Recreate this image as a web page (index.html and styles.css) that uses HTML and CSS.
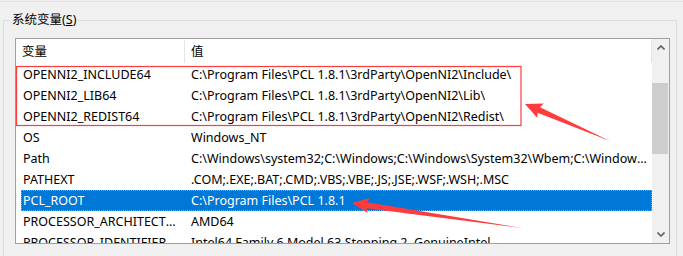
FILE: index.html
```html
<!DOCTYPE html>
<html lang="zh-CN">
<head>
    <meta charset="UTF-8">
    <title>系统变量</title>
    <link rel="stylesheet" href="styles.css">
</head>
<body>
    <div class="topline"></div>

    <fieldset class="group">
        <legend>系统变量(<u>S</u>)</legend>

        <div class="listview">
            <div class="list-main">
                <div class="list-header">
                    <div class="hcell name">变量</div>
                    <div class="hcell value">值</div>
                </div>
                <div class="rows">
                    <div class="row"><span class="cell name">OPENNI2_INCLUDE64</span><span class="cell value">C:\Program Files\PCL 1.8.1\3rdParty\OpenNI2\Include\</span></div>
                    <div class="row"><span class="cell name">OPENNI2_LIB64</span><span class="cell value">C:\Program Files\PCL 1.8.1\3rdParty\OpenNI2\Lib\</span></div>
                    <div class="row"><span class="cell name">OPENNI2_REDIST64</span><span class="cell value">C:\Program Files\PCL 1.8.1\3rdParty\OpenNI2\Redist\</span></div>
                    <div class="row"><span class="cell name">OS</span><span class="cell value">Windows_NT</span></div>
                    <div class="row"><span class="cell name">Path</span><span class="cell value">C:\Windows\system32;C:\Windows;C:\Windows\System32\Wbem;C:\Windows\System32\WindowsPowerShell\v1.0\</span></div>
                    <div class="row"><span class="cell name">PATHEXT</span><span class="cell value">.COM;.EXE;.BAT;.CMD;.VBS;.VBE;.JS;.JSE;.WSF;.WSH;.MSC</span></div>
                    <div class="row selected"><span class="cell name">PCL_ROOT</span><span class="cell value">C:\Program Files\PCL 1.8.1</span></div>
                    <div class="row"><span class="cell name">PROCESSOR_ARCHITECTURE</span><span class="cell value">AMD64</span></div>
                    <div class="row"><span class="cell name">PROCESSOR_IDENTIFIER</span><span class="cell value">Intel64 Family 6 Model 63 Stepping 2, GenuineIntel</span></div>
                </div>
            </div>

            <div class="scrollbar">
                <div class="sb-btn">
                    <svg width="8" height="5" viewBox="0 0 8 5"><polyline points="0.5,4.5 4,1 7.5,4.5" fill="none" stroke="#606060" stroke-width="1.6"/></svg>
                </div>
                <div class="sb-track"><div class="sb-thumb"></div></div>
                <div class="sb-btn">
                    <svg width="8" height="5" viewBox="0 0 8 5"><polyline points="0.5,0.5 4,4 7.5,0.5" fill="none" stroke="#606060" stroke-width="1.6"/></svg>
                </div>
            </div>
        </div>
    </fieldset>

    <!-- red annotations drawn over the screenshot -->
    <svg class="marks" width="683" height="256" viewBox="0 0 683 256">
        <rect x="16.5" y="66.5" width="504.5" height="59" fill="none" stroke="#ff3b3b" stroke-width="1.2"/>
        <polygon fill="#ff3b3b" points="525,104 543.8,103.5 540,107.3 610,141 537.6,112.8 537.4,118.1"/>
        <polygon fill="#ff3b3b" points="352,203 369.9,198.1 367.2,202.2 522,228 366.4,208.2 367.7,212.9"/>
    </svg>
</body>
</html>
```

FILE: styles.css
```css
html {
    overflow: hidden;
}

body {
    margin: 0;
    background-color: #f0f0f0;
    font-family: "Noto Sans", "Noto Sans CJK SC", sans-serif;
    font-size: 12.5px;
    line-height: 16px;
    color: #000;
    height: 256px;
    overflow: hidden;
    position: relative;
}

.topline {
    height: 1px;
    margin-top: 1px;
    background-color: #e2e2e2;
}

/* Group box */
.group {
    margin: 10px 6px 0 3px;
    padding: 10px 6px 12px 11px;
    border: 1px solid #dcdcdc;
    border-bottom: none;
    min-width: 0;
}

.group legend {
    margin-left: -5px;
    padding: 0 2px;
}

/* List view */
.listview {
    display: flex;
    height: 204px;
    border: 1px solid #a0a0a0;
    background-color: #fff;
}

.list-main {
    flex: 1;
    min-width: 0;
    overflow: hidden;
}

.list-header {
    display: flex;
    height: 25px;
    align-items: center;
}

.hcell {
    height: 23px;
    line-height: 23px;
    padding-left: 6px;
    border-right: 1px solid #e5e5e5;
    box-sizing: border-box;
}

.hcell.name {
    width: 169px;
}

.hcell.value {
    flex: 1;
    padding-left: 6px;
}

.rows {
    padding-left: 5px;
}

.row {
    display: flex;
    height: 21px;
    line-height: 21px;
    white-space: nowrap;
}

.cell {
    overflow: hidden;
    text-overflow: ellipsis;
}

.cell.name {
    width: 163px;
    padding: 0 6px 0 2px;
    box-sizing: border-box;
}

.cell.value {
    flex: 1;
    padding: 0 4px 0 7px;
}

.row.selected {
    background-color: #0078d7;
    color: #fff;
    outline: 1px dotted #f0902a;
    outline-offset: -1px;
}

/* Scrollbar */
.scrollbar {
    width: 17px;
    display: flex;
    flex-direction: column;
    background-color: #f0f0f0;
}

.sb-btn {
    height: 17px;
    display: flex;
    align-items: center;
    justify-content: center;
}

.sb-track {
    flex: 1;
    padding-top: 27px;
}

.sb-thumb {
    height: 71px;
    margin-right: 1px;
    background-color: #cdcdcd;
}

/* Annotations */
.marks {
    position: absolute;
    top: 0;
    left: 0;
}
```
